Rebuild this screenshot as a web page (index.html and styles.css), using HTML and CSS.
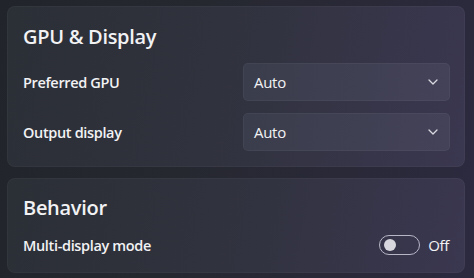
FILE: index.html
```html
<!DOCTYPE html>
<html>
<head>
<meta charset="utf-8">
<link rel="stylesheet" href="styles.css">
</head>
<body>
<div class="page">
  <section class="card card-gpu">
    <h2 class="card-title">GPU &amp; Display</h2>
    <div class="row">
      <span class="label">Preferred GPU</span>
      <div class="select"><span>Auto</span>
        <svg class="chev" width="10" height="6" viewBox="0 0 10 6"><path d="M1 1l4 4 4-4" fill="none" stroke="#d8d8e0" stroke-width="1.3" stroke-linecap="round" stroke-linejoin="round"/></svg>
      </div>
    </div>
    <div class="row">
      <span class="label">Output display</span>
      <div class="select"><span>Auto</span>
        <svg class="chev" width="10" height="6" viewBox="0 0 10 6"><path d="M1 1l4 4 4-4" fill="none" stroke="#d8d8e0" stroke-width="1.3" stroke-linecap="round" stroke-linejoin="round"/></svg>
      </div>
    </div>
  </section>
  <section class="card card-behavior">
    <h2 class="card-title">Behavior</h2>
    <div class="row">
      <span class="label">Multi-display mode</span>
      <div class="toggle-wrap">
        <span class="toggle"><span class="knob"></span></span>
        <span class="toggle-text">Off</span>
      </div>
    </div>
  </section>
</div>
</body>
</html>
```
FILE: styles.css
```css
html, body {
  margin: 0;
  padding: 0;
}
body {
  width: 474px;
  height: 278px;
  overflow: hidden;
  background: linear-gradient(100deg, #21252b 0%, #262830 40%, #2c2a3f 100%);
  font-family: "Open Sans", "Noto Sans", sans-serif;
  color: #f2f2f4;
}
.page {
  padding: 6px 9px 0 7px;
  display: flex;
  flex-direction: column;
  gap: 11px;
}
.card {
  border-radius: 8px;
  background: linear-gradient(100deg, #2b2f36 0%, #30323d 45%, #3a3750 100%);
  box-shadow: inset 0 0 0 1px rgba(255,255,255,0.03);
  padding: 0 15px 0 16px;
}
.card-gpu {
  height: 161px;
  padding-top: 17px;
  box-sizing: border-box;
}
.card-behavior {
  height: 95px;
  padding-top: 16px;
  box-sizing: border-box;
}
.card-title {
  margin: 0;
  font-size: 20px;
  font-weight: 600;
  line-height: 28px;
  letter-spacing: -0.3px;
}
.card-gpu .card-title {
  margin-bottom: 12px;
}
.card-behavior .card-title {
  margin-bottom: 13px;
}
.row {
  display: flex;
  align-items: center;
  justify-content: space-between;
}
.card-gpu .row + .row {
  margin-top: 12px;
}
.label {
  font-size: 14.5px;
  font-weight: 600;
  letter-spacing: -0.35px;
}
.select {
  width: 207px;
  height: 38px;
  box-sizing: border-box;
  border-radius: 5px;
  background: linear-gradient(100deg, #3a3d4b 0%, #444259 100%);
  box-shadow: inset 0 0 0 1px rgba(255,255,255,0.04);
  display: flex;
  align-items: center;
  justify-content: space-between;
  padding: 0 12px 0 11px;
  font-size: 15px;
  letter-spacing: -0.3px;
}
.chev {
  display: block;
}
.toggle-wrap {
  display: flex;
  align-items: center;
  gap: 8px;
  margin-right: 1px;
}
.toggle {
  width: 41px;
  height: 20px;
  box-sizing: border-box;
  border: 1.5px solid #b8b6c6;
  border-radius: 10px;
  display: flex;
  align-items: center;
  padding-left: 4px;
}
.knob {
  width: 12px;
  height: 12px;
  border-radius: 50%;
  background: #d9d8de;
}
.toggle-text {
  font-size: 15px;
  letter-spacing: -0.3px;
}
```
